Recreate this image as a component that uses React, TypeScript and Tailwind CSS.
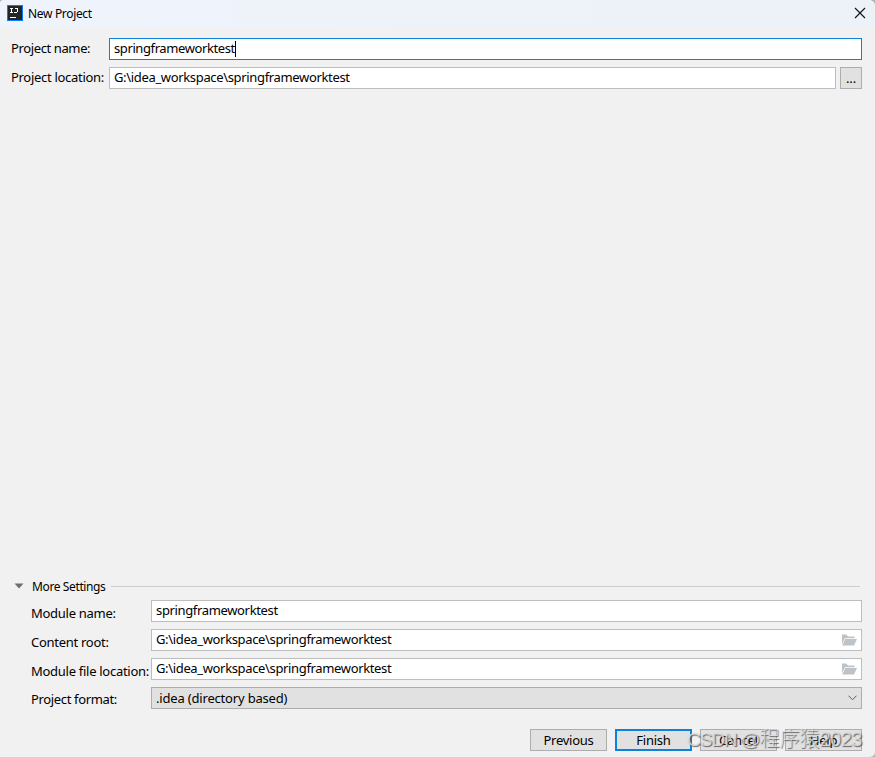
import { clsx } from "clsx";

const MODULE_ROWS = [
  { label: "Module name:", value: "springframeworktest", browse: false },
  { label: "Content root:", value: "G:\\idea_workspace\\springframeworktest", browse: true },
  { label: "Module file location:", value: "G:\\idea_workspace\\springframeworktest", browse: true },
];

const BUTTONS = [
  { label: "Previous", primary: false },
  { label: "Finish", primary: true },
  { label: "Cancel", primary: false },
  { label: "Help", primary: false },
];

function AppLogo() {
  return (
    <svg width="16" height="16" viewBox="0 0 16 16" className="-mt-[2px] shrink-0" shapeRendering="crispEdges">
      <rect width="16" height="16" fill="#087cfa" />
      <rect x="1" y="1" width="14" height="14" fill="#222427" />
      <path d="M3 3.5h3M4.5 3v5M3 7.5h3M8 3.5h3M10.5 3v4M7 7.5h3M3 12.5h6" stroke="#fff" fill="none" />
    </svg>
  );
}

function FolderIcon() {
  return (
    <svg width="16" height="12" viewBox="0 0 16 12" className="shrink-0">
      <path d="M1 0.5h4.3l1.7 2h6.5v1.8H4L1 10z" fill="#bdc3c7" />
      <path d="M4.3 5H16L13 11.5H1.2z" fill="#bdc3c7" />
    </svg>
  );
}

function ModuleRow({ label, value, browse }: (typeof MODULE_ROWS)[number]) {
  return (
    <div className="flex h-[22px] items-center">
      <label className="w-[120px] shrink-0 pt-[3px] tracking-[-0.28px] whitespace-nowrap">{label}</label>
      <div className="flex h-[22px] flex-1 items-center justify-between border border-[#bdbdbd] bg-white pr-1 pl-1">
        <span className="-mt-[2px] tracking-[-0.35px]">{value}</span>
        {browse && <FolderIcon />}
      </div>
    </div>
  );
}

export default function App() {
  return (
    <div className="h-[757px] w-[875px] overflow-hidden bg-[#b4b4b4]">
      <div className="relative flex h-full flex-col overflow-hidden rounded-tl-[4px] rounded-tr-[6px] rounded-br-[5px] bg-[#f1f1f1] font-['Noto_Sans','Noto_Sans_CJK_SC',sans-serif] text-[13px] leading-[18px] text-black">
        {/* Title bar */}
        <header className="flex h-7 shrink-0 items-center bg-linear-to-r from-[#eff3fb] to-[#ecf2f7] pr-[9px] pl-[7px]">
          <AppLogo />
          <h1 className="ml-[5px] text-[12px] tracking-[-0.33px]">New Project</h1>
          <svg width="12" height="12" viewBox="0 0 12 12" className="-mt-[2px] ml-auto">
            <path d="M1 1l10 10M11 1L1 11" stroke="#111" strokeWidth="1.1" fill="none" />
          </svg>
        </header>

        {/* Project fields */}
        <section className="flex flex-col gap-[7px] pt-[10px] pr-[13px] pl-[11px]">
          <div className="flex h-[22px] items-center">
            <label className="-mt-[2px] w-[98px] shrink-0 tracking-[-0.38px] whitespace-nowrap">Project name:</label>
            <div className="flex h-[22px] flex-1 items-center border border-[#0d82d8] bg-white pl-1">
              <span className="-mt-[2px] tracking-[-0.4px]">springframeworktest</span>
              <span className="-mt-px h-4 w-px bg-black" />
            </div>
          </div>
          <div className="flex h-[22px] items-center">
            <label className="-mt-[2px] w-[98px] shrink-0 tracking-[-0.3px] whitespace-nowrap">Project location:</label>
            <div className="flex h-[22px] flex-1 items-center border border-[#bdbdbd] bg-white pl-1">
              <span className="-mt-[2px] tracking-[-0.34px]">G:\idea_workspace\springframeworktest</span>
            </div>
            <button className="ml-1 h-[22px] w-[22px] border border-[#adadad] bg-[#e1e1e1] text-center leading-[18px] tracking-[-0.2px]">...</button>
          </div>
        </section>

        {/* More settings */}
        <section className="mt-auto flex flex-col pr-[13px]">
          <div className="flex h-[18px] items-center pr-[2px] pl-[14px]">
            <svg width="10" height="6" viewBox="0 0 10 6">
              <path d="M0.5 0.5h9L5 5.5z" fill="#6e6e6e" />
            </svg>
            <h2 className="mt-[2px] ml-2 w-[79px] text-[12px] tracking-[-0.38px] whitespace-nowrap">More Settings</h2>
            <span className="h-px flex-1 bg-[#cdcdcd]" />
          </div>
          <div className="mt-[5px] flex flex-col gap-[7px] pl-[31px]">
            {MODULE_ROWS.map((row) => (
              <ModuleRow key={row.label} {...row} />
            ))}
            <div className="flex h-[22px] items-center">
              <label className="w-[120px] shrink-0 pt-px tracking-[-0.35px] whitespace-nowrap">Project format:</label>
              <div className="flex h-[22px] flex-1 items-center justify-between border border-[#adadad] bg-[#e1e1e1] pr-1 pl-1">
                <span className="tracking-[-0.18px]">.idea (directory based)</span>
                <svg width="9" height="6" viewBox="0 0 9 6">
                  <path d="M0.5 0.7L4.5 4.7L8.5 0.7" stroke="#5c5c5c" fill="none" />
                </svg>
              </div>
            </div>
          </div>
        </section>

        {/* Footer buttons */}
        <footer className="flex justify-end gap-2 pt-5 pr-[13px] pb-[6px]">
          {BUTTONS.map(({ label, primary }) => (
            <button
              key={label}
              className={clsx(
                "flex h-[22px] w-[77px] items-center justify-center bg-[#e1e1e1] pb-px tracking-[-0.25px]",
                primary ? "border-2 border-[#0d82d8]" : "border border-[#adadad]"
              )}
            >
              {label}
            </button>
          ))}
        </footer>

        {/* Author stamp over the buttons */}
        <p className="pointer-events-none absolute top-[724px] left-[687px] font-['Liberation_Sans','Noto_Sans_CJK_SC',sans-serif] text-[20px] leading-[28px] font-light whitespace-nowrap text-[#dedede]/85 [text-shadow:1px_1px_1px_rgba(70,70,70,0.8)]">
          <span className="text-[19px] tracking-[-1px]">CSDN @</span>
          <span className="font-['Noto_Sans_CJK_SC',sans-serif]">程序猿</span>
          <span className="tracking-[-0.5px]">2023</span>
        </p>
      </div>
    </div>
  );
}
